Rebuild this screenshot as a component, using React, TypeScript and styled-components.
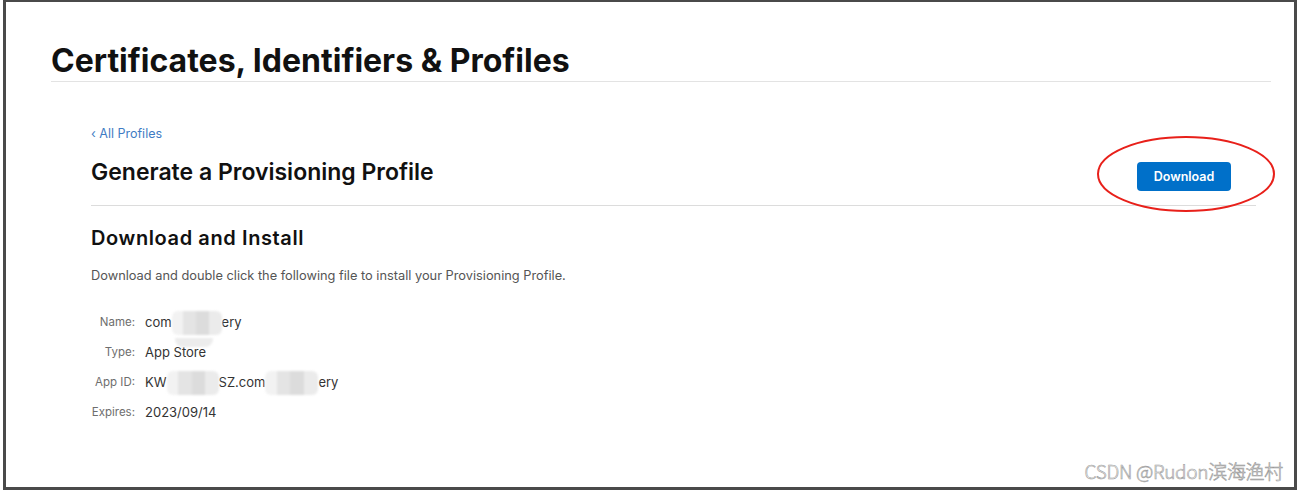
import React from "react";
import styled, { createGlobalStyle } from "styled-components";

const Global = createGlobalStyle`
  html, body { margin: 0; padding: 0; background: #ffffff; }
  body { font-family: Inter, "Noto Sans", sans-serif; -webkit-font-smoothing: antialiased; }
`;

const Frame = styled.div`
  position: relative;
  box-sizing: border-box;
  margin-left: 3px;
  width: 1294px;
  height: 490px;
  border-top: 2px solid #4a4a4a;
  border-left: 3px solid #4a4a4a;
  border-right: 3px solid #4a4a4a;
  border-bottom: 3px solid #4a4a4a;
  background: #fff;
  overflow: hidden;
`;

const Header = styled.header`
  margin: 0 23px 0 45px;
  padding-top: 40px;
  padding-bottom: 1px;
  border-bottom: 1px solid #e3e3e3;
`;

const Title = styled.h1`
  margin: 0;
  height: 38px;
  font-family: Inter, sans-serif;
  font-weight: 700;
  font-size: 32px;
  line-height: 38px;
  letter-spacing: 0px;
  color: #111;
`;

const Content = styled.main`
  margin: 0 38px 0 85px;
  padding-top: 44px;
`;

const BackLink = styled.a`
  display: block;
  font-size: 12.5px;
  line-height: 16px;
  color: #3f7cc4;
  text-decoration: none;
`;

const TopRow = styled.div`
  display: flex;
  align-items: center;
  justify-content: space-between;
  padding: 11px 0 14px;
  border-bottom: 1px solid #dcdcdc;
`;

const PageTitle = styled.h2`
  margin: 0;
  font-size: 23px;
  line-height: 30px;
  font-weight: 600;
  color: #111;
  letter-spacing: 0px;
`;

const DownloadButton = styled.button`
  position: relative;
  width: 94px;
  height: 29px;
  margin: 9px 25px 0 0;
  border: none;
  border-radius: 4px;
  background: #0070c9;
  color: #fff;
  font-family: Inter, sans-serif;
  font-size: 12.5px;
  font-weight: 600;
  cursor: pointer;
`;

const Circle = styled.svg`
  position: absolute;
  left: -41px;
  top: -27px;
  width: 180px;
  height: 78px;
  overflow: visible;
  pointer-events: none;
`;

const SectionTitle = styled.h3`
  margin: 19px 0 0;
  font-size: 20px;
  line-height: 26px;
  font-weight: 600;
  letter-spacing: 0.6px;
  color: #111;
`;

const Description = styled.p`
  margin: 17px 0 0;
  font-size: 12.8px;
  line-height: 16px;
  color: #555;
`;

const InfoList = styled.dl`
  display: grid;
  grid-template-columns: 44px auto;
  column-gap: 10px;
  row-gap: 12.7px;
  margin: 30px 0 0;
  align-items: center;
`;

const Label = styled.dt`
  text-align: right;
  font-size: 11.5px;
  line-height: 17px;
  color: #6e6e6e;
  white-space: nowrap;
`;

const Value = styled.dd`
  margin: 0;
  font-size: 13px;
  line-height: 17px;
  color: #333;
  position: relative;
  white-space: nowrap;
`;

const Redacted = styled.span<{ $w: number }>`
  display: inline-block;
  vertical-align: middle;
  width: ${(p) => p.$w}px;
  height: 24px;
  margin: -4px 0;
  border-radius: 6px;
  background: linear-gradient(
    90deg,
    #f2f2f2 0 22%,
    #e4e4e4 22% 48%,
    #dcdcdc 48% 74%,
    #ebebeb 74% 100%
  );
  filter: blur(0.8px);
`;

const Smudge = styled.span`
  position: absolute;
  left: 30px;
  top: -6px;
  width: 38px;
  height: 9px;
  border-radius: 0 0 8px 8px;
  background: #ececec;
  filter: blur(1px);
`;

const Watermark = styled.div`
  position: absolute;
  right: 11px;
  bottom: 3px;
  font-family: "Noto Sans CJK SC", "Noto Sans", sans-serif;
  font-size: 19px;
  font-weight: 300;
  color: #fff;
  -webkit-text-stroke: 0.6px #9a9a9a;
  letter-spacing: -0.3px;
`;

export default function App() {
  return (
    <>
      <Global />
      <Frame>
        <Header>
          <Title>Certificates, Identifiers &amp; Profiles</Title>
        </Header>
        <Content>
          <BackLink href="#">‹ All Profiles</BackLink>
          <TopRow>
            <PageTitle>Generate a Provisioning Profile</PageTitle>
            <DownloadButton>
              Download
              <Circle viewBox="0 0 180 78">
                <ellipse cx="90" cy="39" rx="88" ry="37" fill="none" stroke="#e8201a" strokeWidth="2" />
              </Circle>
            </DownloadButton>
          </TopRow>
          <SectionTitle>Download and Install</SectionTitle>
          <Description>
            Download and double click the following file to install your Provisioning Profile.
          </Description>
          <InfoList>
            <Label>Name:</Label>
            <Value>
              com<Redacted $w={50} />ery
            </Value>
            <Label>Type:</Label>
            <Value>
              App Store
              <Smudge />
            </Value>
            <Label>App ID:</Label>
            <Value>
              KW<Redacted $w={52} />SZ.com<Redacted $w={53} />ery
            </Value>
            <Label>Expires:</Label>
            <Value>2023/09/14</Value>
          </InfoList>
        </Content>
        <Watermark>CSDN @Rudon滨海渔村</Watermark>
      </Frame>
    </>
  );
}
